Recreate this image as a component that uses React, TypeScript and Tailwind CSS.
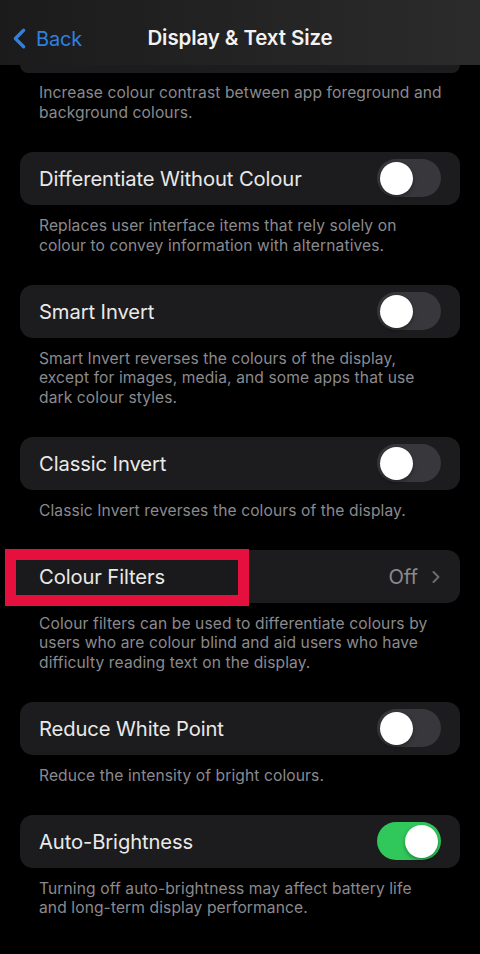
import { ChevronLeft, ChevronRight } from 'lucide-react'

type Row = {
  title: string
  description: string[]
  kind: 'off' | 'on' | 'link'
  highlight?: boolean
}

const rows: Row[] = [
  {
    title: 'Differentiate Without Colour',
    description: [
      'Replaces user interface items that rely solely on',
      'colour to convey information with alternatives.',
    ],
    kind: 'off',
  },
  {
    title: 'Smart Invert',
    description: [
      'Smart Invert reverses the colours of the display,',
      'except for images, media, and some apps that use',
      'dark colour styles.',
    ],
    kind: 'off',
  },
  {
    title: 'Classic Invert',
    description: ['Classic Invert reverses the colours of the display.'],
    kind: 'off',
  },
  {
    title: 'Colour Filters',
    description: [
      'Colour filters can be used to differentiate colours by',
      'users who are colour blind and aid users who have',
      'difficulty reading text on the display.',
    ],
    kind: 'link',
    highlight: true,
  },
  {
    title: 'Reduce White Point',
    description: ['Reduce the intensity of bright colours.'],
    kind: 'off',
  },
  {
    title: 'Auto-Brightness',
    description: [
      'Turning off auto-brightness may affect battery life',
      'and long-term display performance.',
    ],
    kind: 'on',
  },
]

function Toggle({ on }: { on: boolean }) {
  return (
    <div
      className={`flex h-[38px] w-[64px] items-center rounded-full px-[3px] ${
        on ? 'justify-end bg-[#30c85a]' : 'justify-start bg-[#38383c]'
      }`}
    >
      <div className="h-[33px] w-[33px] rounded-full bg-white shadow-[0_2px_4px_rgba(0,0,0,0.35)]" />
    </div>
  )
}

function Description({ lines }: { lines: string[] }) {
  return (
    <div className="px-[39px] pb-[29.4px] pt-[11px] text-[15.6px] leading-[19.6px] tracking-[0.1px] text-[#8a8a8e]">
      {lines.map((l) => (
        <p key={l} className="whitespace-nowrap">
          {l}
        </p>
      ))}
    </div>
  )
}

export default function App() {
  return (
    <div
      className="min-h-[954px] w-[480px] overflow-hidden bg-black"
      style={{ fontFamily: 'Inter, "Noto Sans", sans-serif' }}
    >
      <header className="flex h-[65px] items-center bg-gradient-to-r from-[#1b1b1b] via-[#232323] to-[#2b2b2b] pt-[12px]">
        <div className="flex w-[130px] items-center pl-[3px] text-[#2f80e0]">
          <ChevronLeft size={33} strokeWidth={2.4} />
          <span className="text-[20px] tracking-[-0.2px]">Back</span>
        </div>
        <h1 className="flex-1 pr-[130px] text-center text-[20.5px] font-semibold tracking-[-0.1px] text-[#f2f2f2]">
          Display &amp; Text Size
        </h1>
      </header>

      <div className="mx-[20px] h-[8px] rounded-b-[12px] bg-[#1c1c1e]" />
      <div className="pb-[29.8px] pl-[39px] pt-[10px] text-[15.6px] leading-[19.6px] tracking-[0.1px] text-[#8a8a8e]">
        <p className="whitespace-nowrap">Increase colour contrast between app foreground and</p>
        <p className="whitespace-nowrap">background colours.</p>
      </div>

      {rows.map((row) => (
        <section key={row.title}>
          <div className="relative mx-[20px] flex h-[53px] items-center justify-between rounded-[13px] bg-[#1c1c1e] pl-[19px] pr-[19px]">
            {row.highlight && (
              <div className="absolute left-[-15px] top-[-1px] h-[57px] w-[244px] border-[11px] border-[#e5103d] bg-[#1a1a1c]" />
            )}
            <span className="relative translate-y-[1px] text-[20.2px] tracking-[-0.1px] text-[#e9e9e9]">
              {row.title}
            </span>
            {row.kind === 'link' ? (
              <div className="flex translate-y-[1px] items-center gap-[8px] text-[#8a8a8e]">
                <span className="text-[20.2px]">Off</span>
                <ChevronRight size={20} strokeWidth={2.4} className="mr-[-5px] text-[#6c6c70]" />
              </div>
            ) : (
              <Toggle on={row.kind === 'on'} />
            )}
          </div>
          <Description lines={row.description} />
        </section>
      ))}
    </div>
  )
}
